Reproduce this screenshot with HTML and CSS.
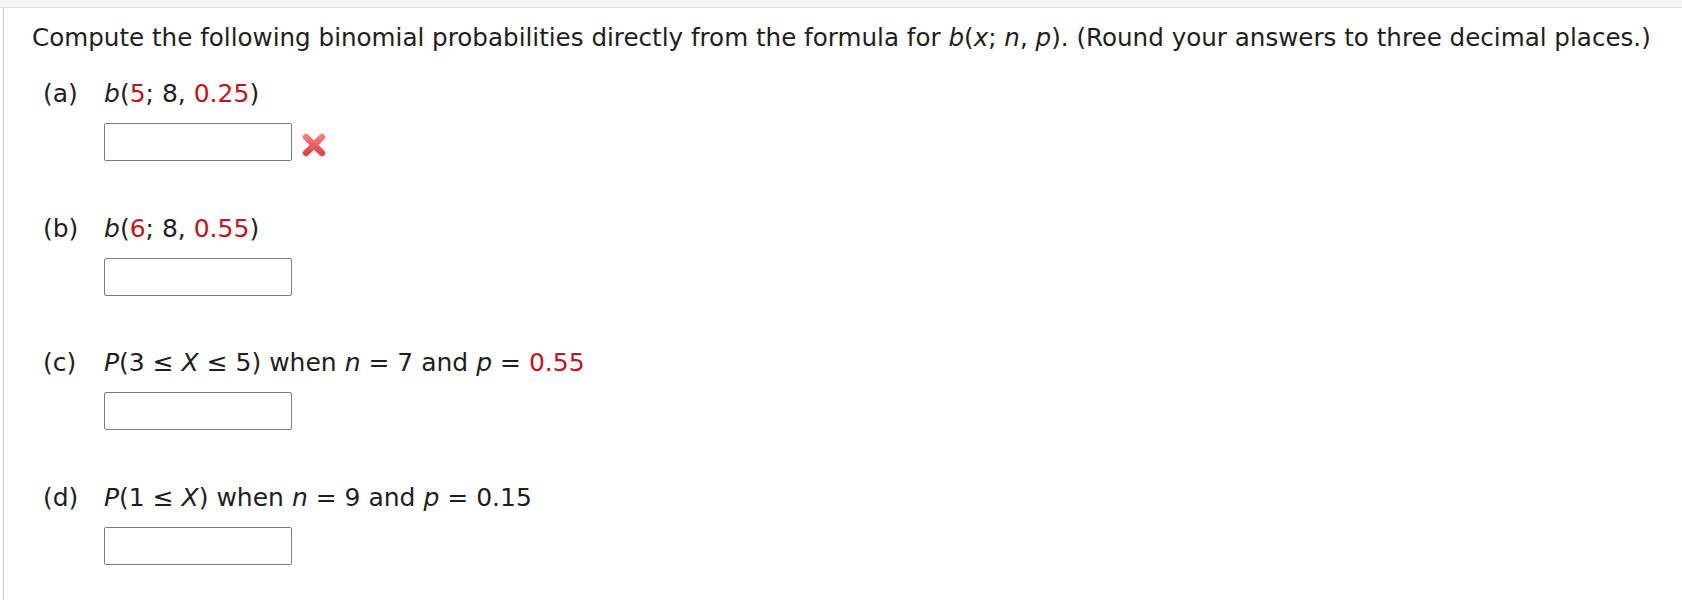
FILE: index.html
```html
<!DOCTYPE html>
<html>
<head>
<meta charset="utf-8">
<link rel="stylesheet" href="styles.css">
</head>
<body>
<div class="topstrip"></div>
<div class="frame">
  <p class="title">Compute the following binomial probabilities directly from the formula for <i>b</i>(<i>x</i>; <i>n</i>, <i>p</i>). (Round your answers to three decimal places.)</p>
  <div class="parts">
    <div class="part">
      <div class="label"><span class="tag">(a)</span><span class="expr"><i>b</i>(<span class="red">5</span>; 8, <span class="red">0.25</span>)</span></div>
      <div class="answer"><input class="box" type="text"><svg class="wrong" viewBox="0 0 26 26" width="26" height="26"><defs><linearGradient id="g" x1="0" y1="0" x2="0" y2="1"><stop offset="0" stop-color="#f47b7b"/><stop offset="1" stop-color="#e2434a"/></linearGradient></defs><path d="M5 5 L21 21 M21 5 L5 21" stroke="url(#g)" stroke-width="6.5" stroke-linecap="round" fill="none"/></svg></div>
    </div>
    <div class="part">
      <div class="label"><span class="tag">(b)</span><span class="expr"><i>b</i>(<span class="red">6</span>; 8, <span class="red">0.55</span>)</span></div>
      <div class="answer"><input class="box" type="text"></div>
    </div>
    <div class="part">
      <div class="label"><span class="tag">(c)</span><span class="expr"><i>P</i>(3 ≤ <i>X</i> ≤ 5) when <i>n</i> = 7 and <i>p</i> = <span class="red">0.55</span></span></div>
      <div class="answer"><input class="box" type="text"></div>
    </div>
    <div class="part">
      <div class="label"><span class="tag">(d)</span><span class="expr"><i>P</i>(1 ≤ <i>X</i>) when <i>n</i> = 9 and <i>p</i> = 0.15</span></div>
      <div class="answer"><input class="box" type="text"></div>
    </div>
  </div>
</div>
</body>
</html>
```
FILE: styles.css
```css
html, body {
  margin: 0;
  padding: 0;
  background: #ffffff;
}
body {
  font-family: "DejaVu Sans", Verdana, sans-serif;
  font-size: 25px;
  color: #1e1e1e;
  width: 1682px;
  height: 600px;
  overflow: hidden;
}
.topstrip {
  height: 7px;
  background: #f6f6f6;
  border-bottom: 1px solid #e2e2e2;
}
.frame {
  margin-left: 3px;
  border-left: 1px solid #cfcfcf;
  height: 592px;
  padding-left: 28px;
}
.title {
  margin: 0;
  padding-top: 15px;
  font-size: 24.6px;
  line-height: 30px;
  white-space: nowrap;
}
.parts {
  display: flex;
  flex-direction: column;
  gap: 52.6px;
  margin-top: 26px;
}
.label {
  display: flex;
  line-height: 30px;
  white-space: pre;
}
.tag {
  margin-left: 11px;
  width: 61px;
}
.answer {
  display: flex;
  align-items: center;
  gap: 9px;
  margin-top: 14px;
  padding-left: 72px;
  height: 38px;
}
.box {
  box-sizing: border-box;
  width: 188px;
  height: 38px;
  border: 1px solid #7d7d7d;
  border-radius: 2px;
  margin: 0;
  padding: 0;
  background: #fff;
}
.wrong {
  margin-top: 6px;
}
.red {
  color: #c0141e;
}
i {
  font-style: italic;
}
```
